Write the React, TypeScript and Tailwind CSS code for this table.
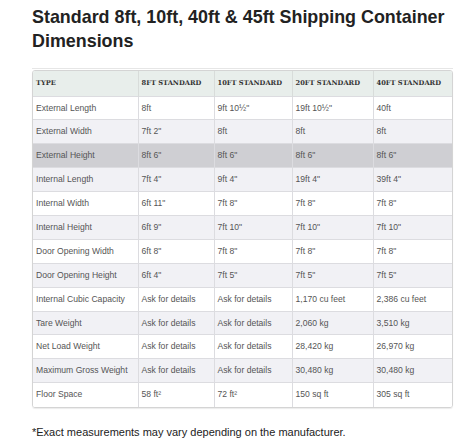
const rows = [
  { type: "External Length", a: "8ft", b: "9ft 10½\"", c: "19ft 10½\"", d: "40ft" },
  { type: "External Width", a: "7ft 2\"", b: "8ft", c: "8ft", d: "8ft" },
  { type: "External Height", a: "8ft 6\"", b: "8ft 6\"", c: "8ft 6\"", d: "8ft 6\"" },
  { type: "Internal Length", a: "7ft 4\"", b: "9ft 4\"", c: "19ft 4\"", d: "39ft 4\"" },
  { type: "Internal Width", a: "6ft 11\"", b: "7ft 8\"", c: "7ft 8\"", d: "7ft 8\"" },
  { type: "Internal Height", a: "6ft 9\"", b: "7ft 10\"", c: "7ft 10\"", d: "7ft 10\"" },
  { type: "Door Opening Width", a: "6ft 8\"", b: "7ft 8\"", c: "7ft 8\"", d: "7ft 8\"" },
  { type: "Door Opening Height", a: "6ft 4\"", b: "7ft 5\"", c: "7ft 5\"", d: "7ft 5\"" },
  { type: "Internal Cubic Capacity", a: "Ask for details", b: "Ask for details", c: "1,170 cu feet", d: "2,386 cu feet" },
  { type: "Tare Weight", a: "Ask for details", b: "Ask for details", c: "2,060 kg", d: "3,510 kg" },
  { type: "Net Load Weight", a: "Ask for details", b: "Ask for details", c: "28,420 kg", d: "26,970 kg" },
  { type: "Maximum Gross Weight", a: "Ask for details", b: "Ask for details", c: "30,480 kg", d: "30,480 kg" },
  { type: "Floor Space", a: "58 ft²", b: "72 ft²", c: "150 sq ft", d: "305 sq ft" },
];

const heads = ["TYPE", "8FT STANDARD", "10FT STANDARD", "20FT STANDARD", "40FT STANDARD"];

export default function App() {
  return (
    <div className="w-[474px] h-[439px] bg-white pl-[32px] pt-[5px] text-[#222]" style={{ fontFamily: '"Liberation Sans", Arial, sans-serif' }}>
      <h1 className="w-[430px] text-[17.9px] font-bold leading-[24px]">
        Standard 8ft, 10ft, 40ft &amp; 45ft Shipping Container Dimensions
      </h1>
      <div className="mt-[15px] h-px w-[421px] bg-[#e6e6e6]" />

      <div className="mt-[1px] w-[421px] rounded-[3px] border border-[#d4d4d4] overflow-hidden shadow-[0_1px_1px_rgba(0,0,0,0.08)]">
        <table className="w-full border-collapse table-fixed">
          <colgroup>
            <col className="w-[105px]" />
            <col className="w-[76px]" />
            <col className="w-[78px]" />
            <col className="w-[81px]" />
            <col />
          </colgroup>
          <thead>
            <tr className="h-[25px] bg-[#e8eeeb]">
              {heads.map((h, i) => (
                <th
                  key={h}
                  className={`text-left font-bold text-[6.7px] text-[#333] px-[3px] whitespace-nowrap ${i > 0 ? "border-l border-[#d8dcda]" : ""}`}
                  style={{ fontFamily: '"DejaVu Serif", serif' }}
                >
                  {h}
                </th>
              ))}
            </tr>
          </thead>
          <tbody>
            {rows.map((r, i) => {
              const bg = i === 2 ? "bg-[#cfcfd3]" : i % 2 === 1 ? "bg-[#f1f1f5]" : "bg-white";
              return (
                <tr key={r.type} className={`h-[23.9px] ${bg} border-t border-[#dcdce0]`}>
                  {[r.type, r.a, r.b, r.c, r.d].map((v, j) => (
                    <td
                      key={j}
                      className={`text-[8.6px] text-[#555] px-[3px] whitespace-nowrap ${j > 0 ? "border-l border-[#dcdce0]" : ""}`}
                    >
                      {v}
                    </td>
                  ))}
                </tr>
              );
            })}
          </tbody>
        </table>
      </div>

      <p className="mt-[17px] text-[11px] text-[#222] leading-[14px]">
        *Exact measurements may vary depending on the manufacturer.
      </p>
    </div>
  );
}
